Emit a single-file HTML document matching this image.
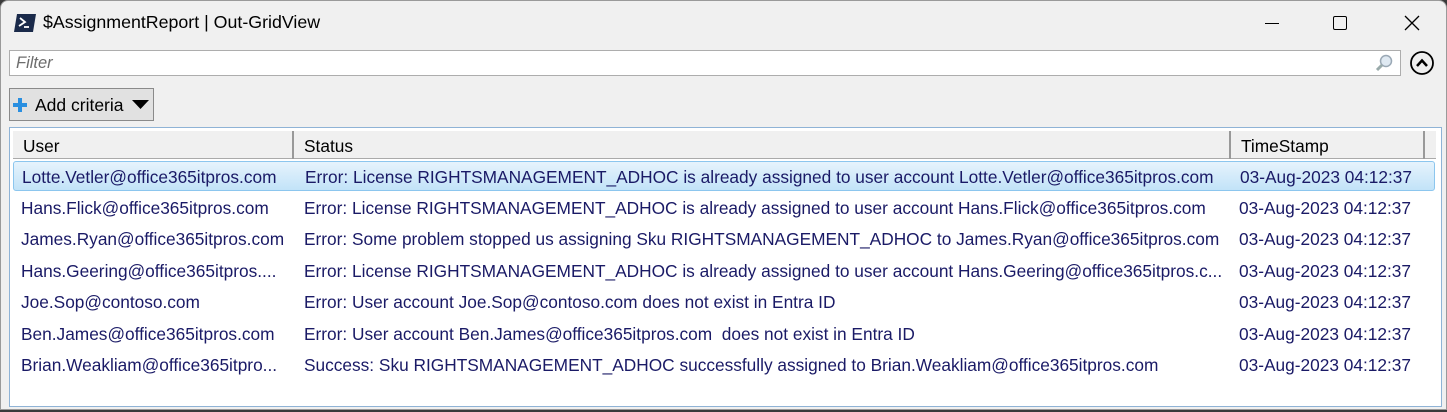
<!DOCTYPE html>
<html><head><meta charset="utf-8"><style>
*{margin:0;padding:0;box-sizing:border-box}
body{width:1447px;height:412px;overflow:hidden;background:#3a3a3a;font-family:"Liberation Sans",sans-serif;position:relative}
#win{position:absolute;left:0;top:0;width:1447px;height:410px;background:#f0f0f0;border:1px solid #9a9a9a;border-radius:8px 8px 0 0}
.t{position:absolute;white-space:nowrap}
#title{left:42px;top:11px;font-size:17.8px;color:#000}
#filter{position:absolute;left:8px;top:49px;width:1392px;height:26px;background:#fff;border:1px solid #adadad}
#filter span{position:absolute;left:6px;top:3px;font-size:16.5px;font-style:italic;color:#6d6d6d}
#btn{position:absolute;left:8px;top:87px;width:145px;height:33px;background:#e1e1e1;border:1px solid #8a8a8a}
#grid{position:absolute;left:8px;top:126px;width:1433px;height:280px;background:#fff;border:1px solid #8fb3d6}
#hdr{position:absolute;left:3px;top:3px;width:1423px;height:28px;background:#f0f0f0;border-bottom:1px solid #aaa}
.hc{position:absolute;top:0;height:28px;border-right:2px solid #999;font-size:17.3px;color:#000;padding:5px 0 0 10px}
.row{position:absolute;left:3px;width:1422px;height:30px;font-size:17.3px;color:#1a1a66}
.row span{position:absolute;top:5px;white-space:nowrap}
.sel{background:linear-gradient(#e6f3fc,#c2e3f8);border:1px solid #8cc6ee;border-radius:3px}
</style></head><body>
<div id="win">
<svg class="t" style="left:13px;top:13px" width="22" height="18" viewBox="0 0 22 18"><path d="M3 0H22L19 18H0Z" fill="#1a2a4a"/><path d="M6 4L11 8L5 12" stroke="#fff" stroke-width="1.8" fill="none"/><path d="M10 13H15" stroke="#fff" stroke-width="1.8"/></svg>
<div class="t" id="title">$AssignmentReport | Out-GridView</div>
<div class="t" style="left:1264px;top:22px;width:14px;height:1px;background:#000"></div>
<div class="t" style="left:1332px;top:15px;width:14px;height:14px;border:1.5px solid #000;border-radius:2px"></div>
<svg class="t" style="left:1403px;top:14px" width="16" height="16"><path d="M1 1L15 15M15 1L1 15" stroke="#000" stroke-width="1.3"/></svg>
<div id="filter"><span>Filter</span>
<svg style="position:absolute;right:6px;top:2px" width="20" height="20"><circle cx="12" cy="8" r="5.5" fill="#dfe9f2" stroke="#9aa8b5" stroke-width="1.5"/><path d="M8 12L3 17" stroke="#9aa" stroke-width="3"/></svg></div>
<svg class="t" style="left:1408px;top:49px" width="26" height="26"><circle cx="13" cy="13" r="11" fill="none" stroke="#000" stroke-width="1.8"/><path d="M8 16L13 10.5L18 16" fill="none" stroke="#000" stroke-width="2.5"/></svg>
<div id="btn">
<svg style="position:absolute;left:3px;top:9px" width="14" height="14"><path d="M5 0H9V5H14V9H9V14H5V9H0V5H5Z" fill="#2a8fe0"/></svg>
<span class="t" style="left:25px;top:6px;font-size:17.5px;color:#000">Add criteria</span>
<svg style="position:absolute;left:122px;top:11px" width="17" height="10"><path d="M0 0H17L8.5 9Z" fill="#000"/></svg>
</div>
<div id="grid">
<div id="hdr">
<div class="hc" style="left:0;width:281px">User</div>
<div class="hc" style="left:281px;width:937px">Status</div>
<div class="hc" style="left:1218px;width:194px">TimeStamp</div>
</div>
<div class="row sel" style="top:33px"><span style="left:8px">Lotte.Vetler@office365itpros.com</span><span style="left:291px">Error: License RIGHTSMANAGEMENT_ADHOC is already assigned to user account Lotte.Vetler@office365itpros.com</span><span style="left:1226px">03-Aug-2023 04:12:37</span></div>
<div class="row" style="top:65px"><span style="left:8px">Hans.Flick@office365itpros.com</span><span style="left:291px">Error: License RIGHTSMANAGEMENT_ADHOC is already assigned to user account Hans.Flick@office365itpros.com</span><span style="left:1226px">03-Aug-2023 04:12:37</span></div>
<div class="row" style="top:96px"><span style="left:8px">James.Ryan@office365itpros.com</span><span style="left:291px">Error: Some problem stopped us assigning Sku RIGHTSMANAGEMENT_ADHOC to James.Ryan@office365itpros.com</span><span style="left:1226px">03-Aug-2023 04:12:37</span></div>
<div class="row" style="top:128px"><span style="left:8px">Hans.Geering@office365itpros....</span><span style="left:291px">Error: License RIGHTSMANAGEMENT_ADHOC is already assigned to user account Hans.Geering@office365itpros.c...</span><span style="left:1226px">03-Aug-2023 04:12:37</span></div>
<div class="row" style="top:159px"><span style="left:8px">Joe.Sop@contoso.com</span><span style="left:291px">Error: User account Joe.Sop@contoso.com does not exist in Entra ID</span><span style="left:1226px">03-Aug-2023 04:12:37</span></div>
<div class="row" style="top:191px"><span style="left:8px">Ben.James@office365itpros.com</span><span style="left:291px">Error: User account Ben.James@office365itpros.com &nbsp;does not exist in Entra ID</span><span style="left:1226px">03-Aug-2023 04:12:37</span></div>
<div class="row" style="top:222px"><span style="left:8px">Brian.Weakliam@office365itpro...</span><span style="left:291px">Success: Sku RIGHTSMANAGEMENT_ADHOC successfully assigned to Brian.Weakliam@office365itpros.com</span><span style="left:1226px">03-Aug-2023 04:12:37</span></div>
</div>
</div>
</body></html>
